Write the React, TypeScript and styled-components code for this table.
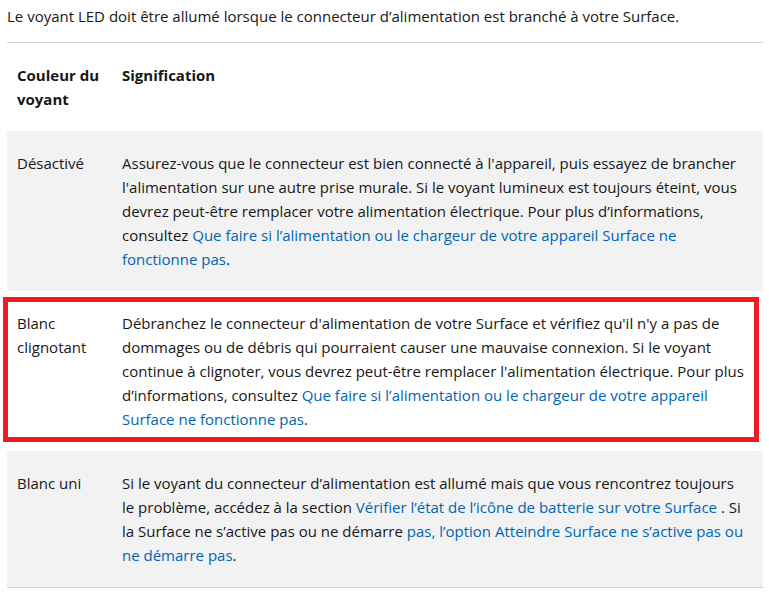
import React from "react";
import styled, { createGlobalStyle } from "styled-components";

const Global = createGlobalStyle`
  html, body { margin: 0; padding: 0; background: #fff; }
  body {
    font-family: "Open Sans", "Noto Sans", sans-serif;
    color: #171717;
  }
`;

const Page = styled.div`
  width: 769px;
  padding: 4px 6px 0 7px;
  box-sizing: border-box;
  font-size: 15px;
  line-height: 24px;
`;

const Intro = styled.p`
  margin: 0 0 14px 0;
  white-space: nowrap;
`;

const Table = styled.div`
  display: grid;
  grid-template-columns: 105px 1fr;
  border-top: 1px solid #d1d1d1;
  border-bottom: 1px solid #d1d1d1;
`;

const Row = styled.div<{ $shaded?: boolean }>`
  grid-column: 1 / -1;
  display: grid;
  grid-template-columns: subgrid;
  position: relative;
  background: ${(p) => (p.$shaded ? "#f2f2f2" : "#ffffff")};
`;

const Cell = styled.div<{ $head?: boolean }>`
  padding: 20px 10px 20px 10px;
  font-weight: ${(p) => (p.$head ? 700 : 400)};
`;

const Link = styled.a`
  color: #0065b3;
  text-decoration: none;
`;

const Highlight = styled.div`
  position: absolute;
  left: -4px;
  right: 4px;
  top: 6px;
  bottom: 9px;
  border: 5px solid #ec1c24;
  pointer-events: none;
`;

export default function App() {
  return (
    <>
      <Global />
      <Page>
        <Intro>
          Le voyant LED doit être allumé lorsque le connecteur d’alimentation est branché à votre Surface.
        </Intro>
        <Table>
          <Row>
            <Cell $head>Couleur du voyant</Cell>
            <Cell $head>Signification</Cell>
          </Row>
          <Row $shaded>
            <Cell>Désactivé</Cell>
            <Cell>
              Assurez-vous que le connecteur est bien connecté à l'appareil, puis essayez de brancher
              l'alimentation sur une autre prise murale. Si le voyant lumineux est toujours éteint, vous
              devrez peut-être remplacer votre alimentation électrique. Pour plus d’informations,
              consultez{" "}
              <Link href="#">
                Que faire si l’alimentation ou le chargeur de votre appareil Surface ne fonctionne pas
              </Link>
              .
            </Cell>
          </Row>
          <Row>
            <Cell>Blanc clignotant</Cell>
            <Cell>
              Débranchez le connecteur d'alimentation de votre Surface et vérifiez qu'il n'y a pas de
              dommages ou de débris qui pourraient causer une mauvaise connexion. Si le voyant continue
              à clignoter, vous devrez peut-être remplacer l'alimentation électrique. Pour plus
              d’informations, consultez{" "}
              <Link href="#">
                Que faire si l’alimentation ou le chargeur de votre appareil Surface ne fonctionne pas
              </Link>
              .
            </Cell>
            <Highlight />
          </Row>
          <Row $shaded>
            <Cell>Blanc uni</Cell>
            <Cell>
              Si le voyant du connecteur d’alimentation est allumé mais que vous rencontrez toujours
              <br />
              le problème, accédez à la section{" "}
              <Link href="#">Vérifier l’état de l’icône de batterie sur votre Surface</Link> . Si
              <br />
              la Surface ne s’active pas ou ne démarre{" "}
              <Link href="#">pas, l’option Atteindre Surface ne s’active pas ou ne démarre pas</Link>.
            </Cell>
          </Row>
        </Table>
      </Page>
    </>
  );
}
